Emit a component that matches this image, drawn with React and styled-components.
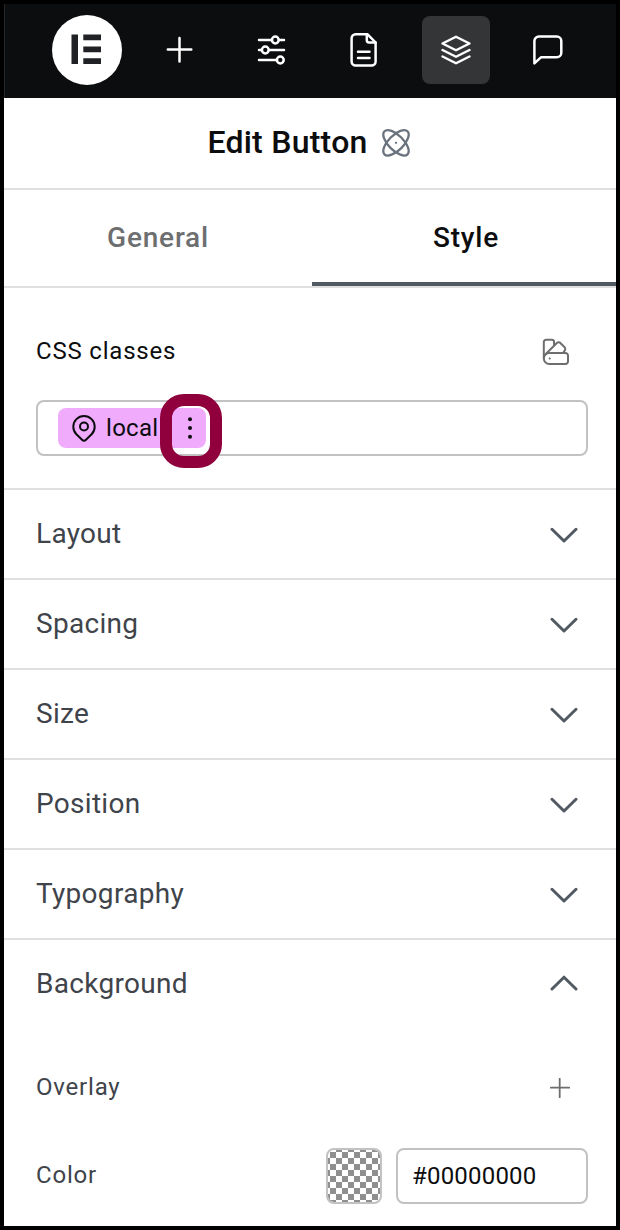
import React from 'react'
import styled, { createGlobalStyle } from 'styled-components'

const GlobalStyle = createGlobalStyle`
  * {
    box-sizing: border-box;
  }
  body {
    margin: 0;
    background: #000;
    font-family: Roboto, "Liberation Sans", sans-serif;
  }
`

const Panel = styled.div`
  width: 620px;
  height: 1230px;
  border: 4px solid #000;
  background: #fff;
  display: flex;
  flex-direction: column;
  overflow: hidden;
`

const Toolbar = styled.div`
  height: 94px;
  flex-shrink: 0;
  display: grid;
  grid-template-columns: repeat(6, 92px);
  padding: 0 0 2px 37px;
  align-items: center;
  justify-items: center;
  background: #0c0d0e;
  border-left: 1px solid #252627;
`

const Logo = styled.div`
  width: 70px;
  height: 70px;
  margin-right: 2px;
  border-radius: 50%;
  background: #fff;
  display: flex;
`

const ToolButton = styled.button`
  width: 68px;
  height: 68px;
  padding: 0;
  border: none;
  border-radius: 8px;
  background: ${({ $active }) => ($active ? '#343536' : 'transparent')};
  display: flex;
  align-items: center;
  justify-content: center;
`

const Icon = styled.svg`
  display: block;
  flex-shrink: 0;
  fill: none;
  stroke: ${({ $color }) => $color || '#fff'};
  stroke-width: ${({ $stroke }) => $stroke || 2.5};
  stroke-linecap: round;
  stroke-linejoin: round;
`

const TitleBar = styled.div`
  height: 92px;
  flex-shrink: 0;
  padding: 0 2px 2px 0;
  display: flex;
  align-items: center;
  justify-content: center;
  gap: 13px;
  border-bottom: 2px solid #e0e0e0;
`

const Title = styled.h1`
  margin: 0;
  font-size: 32px;
  line-height: 40px;
  font-weight: 500;
  letter-spacing: 0.25px;
  color: #0c0d0e;
`

const Tabs = styled.div`
  height: 98px;
  flex-shrink: 0;
  display: grid;
  grid-template-columns: 1fr 1fr;
  border-bottom: 2px solid #e0e0e0;
`

const Tab = styled.button`
  padding: 2px 0 0 ${({ $active }) => ($active ? '4px' : '2px')};
  border: none;
  border-bottom: 4px solid ${({ $active }) => ($active ? '#515962' : 'transparent')};
  background: none;
  margin-left: ${({ $active }) => ($active ? '2px' : '0')};
  font-family: inherit;
  font-size: 28px;
  font-weight: 500;
  letter-spacing: 0.8px;
  color: ${({ $active }) => ($active ? '#0c0d0e' : '#6d6e6f')};
`

const Classes = styled.div`
  height: 202px;
  flex-shrink: 0;
  padding: 42px 28px 0 32px;
  border-bottom: 2px solid #e0e0e0;
`

const Label = styled.span`
  padding-bottom: 2px;
  font-size: 24px;
  line-height: 40px;
  letter-spacing: 0.8px;
  color: ${({ $dark }) => ($dark ? '#0c0d0e' : '#3f444b')};
`

const LabelRow = styled.div`
  display: flex;
  align-items: center;
  justify-content: space-between;
  height: 44px;
  padding-right: 18px;
`

const ClassInput = styled.div`
  height: 56px;
  margin-top: 26px;
  padding-left: 20px;
  display: flex;
  align-items: center;
  border: 2px solid #c2c2c2;
  border-radius: 8px;
`

const Chip = styled.div`
  width: 148px;
  height: 40px;
  padding-left: 12px;
  display: flex;
  align-items: center;
  border-radius: 8px;
  background: #f0abfc;
  color: #0c0d0e;
  font-size: 24px;
  letter-spacing: 0.3px;
`

const ChipText = styled.span`
  width: 52px;
  margin-left: 8px;
`

const ChipMenu = styled.span`
  position: relative;
  width: 34px;
  height: 40px;
  margin-left: auto;
  padding-left: 2px;
  display: flex;
  align-items: center;
  justify-content: center;
`

const Highlight = styled.span`
  position: absolute;
  left: -12px;
  top: -14px;
  width: 62px;
  height: 74px;
  border: 12px solid #8f003c;
  border-radius: 24px;
`

const Section = styled.div`
  height: 90px;
  flex-shrink: 0;
  padding: 0 38px 0 32px;
  display: flex;
  align-items: center;
  justify-content: space-between;
  border-bottom: 2px solid ${({ $open }) => ($open ? 'transparent' : '#e0e0e0')};
`

const SectionTitle = styled.span`
  font-size: 28px;
  line-height: 40px;
  letter-spacing: 0.3px;
  color: #3f444b;
`

const Field = styled.div`
  height: 56px;
  flex-shrink: 0;
  margin-top: ${({ $top }) => $top}px;
  padding: 0 ${({ $right }) => $right}px 0 32px;
  display: flex;
  align-items: center;
  justify-content: space-between;
`

const ColorControl = styled.div`
  display: flex;
  gap: 14px;
`

const Swatch = styled.div`
  width: 56px;
  height: 56px;
  border: 2px solid #c2c2c2;
  border-radius: 8px;
  background: repeating-conic-gradient(#fff 0 25%, #8f8f8f 0 50%) 2px 2px / 12px 12px padding-box;
`

const HexInput = styled.div`
  width: 192px;
  height: 56px;
  padding-left: 14px;
  border: 2px solid #c2c2c2;
  border-radius: 8px;
  font-size: 24px;
  line-height: 52px;
  letter-spacing: 0.2px;
  color: #0c0d0e;
`

const sections = ['Layout', 'Spacing', 'Size', 'Position', 'Typography']

const Chevron = ({ up }) => (
  <Icon width="28" height="18" viewBox="0 0 28 18" $color="#515962" $stroke={3}>
    <path d={up ? 'M2 14 14 2.2 26 14' : 'M2 4.3 14 16 26 4.3'} />
  </Icon>
)

const App = () => {
  return (
    <>
      <GlobalStyle />
      <Panel>
        <Toolbar>
          <Logo>
            <svg width="70" height="70" viewBox="0 0 70 70" fill="#1f2124">
              <path d="M19.5 19.5h6.5v29.5h-6.5zM31.3 19.5h17.7v5.7H31.3zM31.3 31.5h17.7v5.7H31.3zM31.3 43.3h17.7v5.7H31.3z" />
            </svg>
          </Logo>
          <ToolButton>
            <Icon width="36" height="36" viewBox="0 0 36 36">
              <path d="M17.5 6v23.5M5.8 17.5h23.5" />
            </Icon>
          </ToolButton>
          <ToolButton>
            <Icon width="36" height="36" viewBox="0 0 36 36" $stroke={2.5}>
              <path d="M5 8h13M25 8h5M5 18h2.5M15 18h15M5 28h17.5" />
              <circle cx="21.3" cy="8" r="3.4" />
              <circle cx="11.3" cy="18" r="3.4" />
              <circle cx="26.3" cy="28" r="3.4" />
            </Icon>
          </ToolButton>
          <ToolButton>
            <Icon width="36" height="36" viewBox="0 0 36 36">
              <path d="M21.6 2.3H9.6a4 4 0 0 0-4 4v23.2a4 4 0 0 0 4 4h16a4 4 0 0 0 4-4V10.5L21.6 2.3Z" />
              <path d="M20.8 2.3v6a2.2 2.2 0 0 0 2.2 2.2h6.6M12 19.8h11.5M12 26h11.5" />
            </Icon>
          </ToolButton>
          <ToolButton $active>
            <Icon width="36" height="36" viewBox="0 0 36 36" $stroke={2.4}>
              <path d="M18 4.7 31.5 11.5 18 18.3 4.5 11.5Z" />
              <path d="M4.5 18 18 24.8 31.5 18M4.5 24.5 18 31.3 31.5 24.5" />
            </Icon>
          </ToolButton>
          <ToolButton>
            <Icon width="36" height="36" viewBox="0 0 36 36">
              <path d="M4.4 31.3V9a4.5 4.5 0 0 1 4.5-4.5h17.9A4.5 4.5 0 0 1 31.3 9v11.8a4.5 4.5 0 0 1-4.5 4.5H10.9Z" />
            </Icon>
          </ToolButton>
        </Toolbar>

        <TitleBar>
          <Title>Edit Button</Title>
          <Icon width="30" height="32" viewBox="0 -1 30 32" $color="#69727d" $stroke={2.3}>
            <ellipse cx="15" cy="15.8" rx="16.3" ry="7.5" transform="rotate(45 15 15.8)" />
            <ellipse cx="15" cy="15.8" rx="16.3" ry="7.5" transform="rotate(-45 15 15.8)" />
            <path d="M15 15.8h.01" />
          </Icon>
        </TitleBar>

        <Tabs>
          <Tab>General</Tab>
          <Tab $active>Style</Tab>
        </Tabs>

        <Classes>
          <LabelRow>
            <Label $dark>CSS classes</Label>
            <Icon width="28" height="28" viewBox="0 0 28 28" $color="#6d6e6f" $stroke={2}>
              <path d="M1.8 20.3V4A2.2 2.2 0 0 1 4 1.8h5.8A2.2 2.2 0 0 1 12 4v2.8" />
              <path d="M2.8 17 14.6 5.2a2.8 2.8 0 0 1 4 0L22.4 9a2.8 2.8 0 0 1 0 4L20.8 15" />
              <path d="M7.3 15h16.2a2.5 2.5 0 0 1 2.5 2.5v6a2.5 2.5 0 0 1-2.5 2.5H7.3a5.5 5.5 0 0 1 0-11Z" />
              <path d="M7.6 20.5h.2" />
            </Icon>
          </LabelRow>
          <ClassInput>
            <Chip>
              <Icon width="28" height="30" viewBox="0 0 28 30" $color="#0c0d0e" $stroke={2}>
                <circle cx="14" cy="13.5" r="4" />
                <path d="M21.6 21.2 15.7 27a2.4 2.4 0 0 1-3.4 0L6.4 21.2a10.7 10.7 0 1 1 15.2 0Z" />
              </Icon>
              <ChipText>local</ChipText>
              <ChipMenu>
                <svg width="6" height="24" viewBox="0 0 6 24" fill="#0c0d0e">
                  <circle cx="3" cy="3.2" r="2" />
                  <circle cx="3" cy="12" r="2" />
                  <circle cx="3" cy="20.8" r="2" />
                </svg>
                <Highlight />
              </ChipMenu>
            </Chip>
          </ClassInput>
        </Classes>

        {sections.map((name) => (
          <Section key={name}>
            <SectionTitle>{name}</SectionTitle>
            <Chevron />
          </Section>
        ))}
        <Section $open>
          <SectionTitle>Background</SectionTitle>
          <Chevron up />
        </Section>

        <Field $top={30} $right={46}>
          <Label>Overlay</Label>
          <Icon width="20" height="20" viewBox="0 0 20 20" $color="#6d6e6f" $stroke={1.8}>
            <path d="M9.7 .8v18.4M.8 9.7h18.4" />
          </Icon>
        </Field>
        <Field $top={32} $right={28}>
          <Label>Color</Label>
          <ColorControl>
            <Swatch />
            <HexInput>#00000000</HexInput>
          </ColorControl>
        </Field>
      </Panel>
    </>
  )
}

export default App
